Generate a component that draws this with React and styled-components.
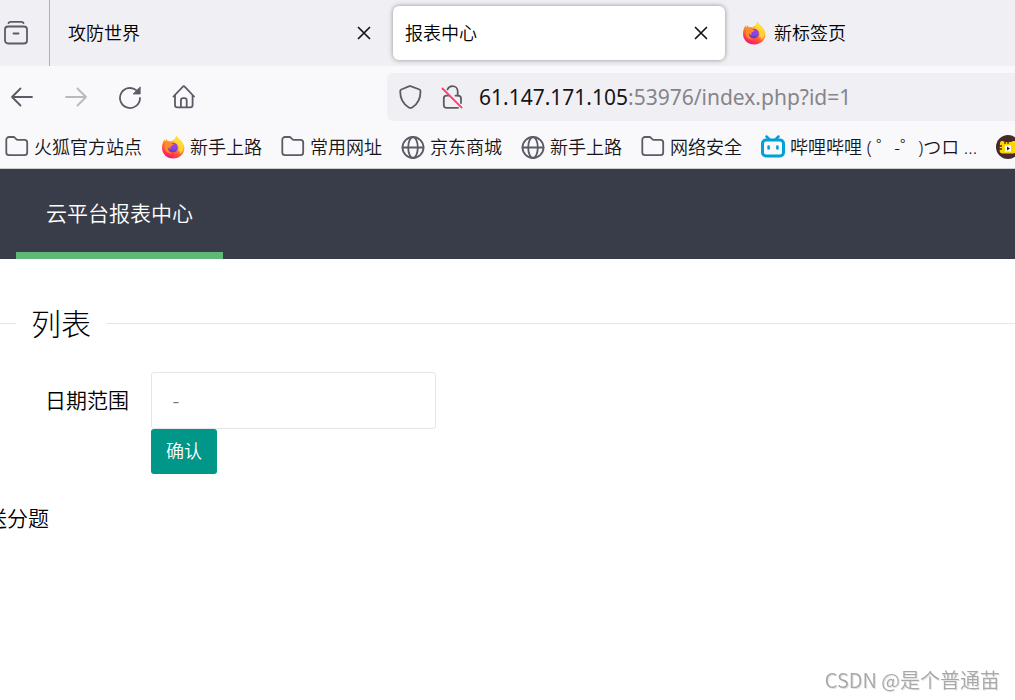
import React from 'react';
import styled, { createGlobalStyle, css } from 'styled-components';

const GlobalStyle = createGlobalStyle`
  * {
    box-sizing: border-box;
  }
  body {
    margin: 0;
    background: #fff;
    color: #000;
    font-family: "Noto Sans", "Noto Sans CJK SC", sans-serif;
    font-weight: 350;
    overflow-x: hidden;
  }
  button, input {
    font-family: inherit;
    font-weight: inherit;
  }
`;

const Browser = styled.div`
  min-height: 100vh;
  overflow: hidden;
`;

const TabStrip = styled.div`
  display: flex;
  align-items: center;
  height: 66px;
  background: #f0eff4;
`;

const IconButton = styled.button`
  display: flex;
  align-items: center;
  justify-content: center;
  flex: none;
  width: ${props => props.$width || 44}px;
  height: 48px;
  padding: 0;
  border: 0;
  background: none;
  color: #5b5b66;
  opacity: ${props => (props.disabled ? 0.4 : 1)};
`;

const RecentArea = styled.div`
  display: flex;
  align-items: center;
  flex: none;
  width: 50px;
  height: 66px;
  border-right: 1px solid #b0afb5;
`;

const Tabs = styled.div`
  display: flex;
  gap: 5px;
  padding-left: 6px;
`;

const Tab = styled.div`
  display: flex;
  align-items: center;
  flex: none;
  gap: 8px;
  width: 332px;
  height: 54px;
  padding: 0 12px;
  border-radius: 6px;
  ${props => props.$active && css`
    background: #fff;
    box-shadow: 0 0 5px rgba(0, 0, 0, 0.4);
  `}
`;

const TabTitle = styled.span`
  flex: 1;
  font-size: 18px;
  line-height: 24px;
`;

const CloseButton = styled(IconButton)`
  height: 24px;
  color: #15141a;
`;

const Toolbar = styled.div`
  display: flex;
  align-items: center;
  gap: 10px;
  height: 60px;
  padding-top: 1px;
  background: #f9f9fb;
`;

const UrlBar = styled.div`
  display: flex;
  align-items: center;
  flex: 1;
  height: 48px;
  margin-left: 171px;
  padding-left: 11px;
  border-radius: 6px 0 0 6px;
  background: #f0f0f4;
  color: #5b5b66;
`;

const UrlIcons = styled.div`
  display: flex;
  gap: 18px;
  margin-right: 15px;
`;

const Url = styled.div`
  font-size: 21px;
  line-height: 28px;
  font-weight: 400;
  color: #85858b;
`;

const Host = styled.span`
  color: #15141a;
`;

const Bookmarks = styled.nav`
  display: flex;
  align-items: center;
  gap: 19px;
  height: 43px;
  padding-left: 5px;
  border-bottom: 1px solid #ccc;
  background: #f9f9fb;
`;

const Bookmark = styled.a`
  display: flex;
  align-items: center;
  flex: none;
  gap: 5px;
  color: #15141a;
  font-size: 18px;
  line-height: 24px;
  text-decoration: none;
  white-space: pre;
  svg {
    color: #5b5b66;
  }
`;

const Nav = styled.nav`
  display: flex;
  height: 90px;
  padding-left: 16px;
  background: #393d49;
`;

const NavLink = styled.a`
  height: 90px;
  padding: 0 30px;
  border-bottom: 7px solid #5fb878;
  color: #fff;
  font-size: 21px;
  line-height: 88px;
  text-decoration: none;
`;

const Section = styled.fieldset`
  margin: 42px 0 26px;
  padding: 0;
  border: 0;
  border-top: 1px solid #e6e6e6;
`;

const SectionTitle = styled.legend`
  margin-left: 16px;
  padding: 0 15px;
  font-size: 30px;
  line-height: 45px;
  font-weight: 300;
`;

const Form = styled.form`
  display: flex;
`;

const Label = styled.label`
  width: 151px;
  padding-right: 22px;
  font-size: 21px;
  line-height: 56px;
  text-align: right;
`;

const Field = styled.div`
  display: flex;
  flex-direction: column;
  align-items: flex-start;
`;

const DateInput = styled.input`
  width: 285px;
  height: 57px;
  padding: 0 15px;
  border: 1px solid #e6e6e6;
  border-radius: 3px;
  background: #fff;
  font-size: 21px;
  &::placeholder {
    color: #757575;
  }
`;

const Submit = styled.button`
  height: 45px;
  padding: 0 15px 3px;
  border: 0;
  border-radius: 3px;
  background: #009688;
  color: #fff;
  font-size: 18px;
`;

const Note = styled.p`
  margin: 28px 0 0 -14px;
  font-size: 21px;
  line-height: 32px;
`;

const Watermark = styled.div`
  position: fixed;
  right: 15px;
  bottom: 5px;
  color: #a8a8a8;
  font-family: "Noto Sans CJK SC", sans-serif;
  font-size: 20px;
  line-height: 30px;
  text-shadow: 1px 1px 0 #e4e4e4;
`;

const Icon = ({ size = 24, children }) => (
  <svg width={size} height={size} viewBox="0 0 24 24" fill="none" stroke="currentColor"
    strokeWidth="1.8" strokeLinecap="round" strokeLinejoin="round" aria-hidden="true">
    {children}
  </svg>
);

const FolderIcon = () => (
  <Icon>
    <path d="M4 2H8.3C9 2 9.6 2.3 10 2.8L11.3 4.2C11.7 4.7 12.2 4.9 12.8 4.9H19.5C21 4.9 22.2 6 22.2 7.500V17.500C22.2 19 21 20.200 19.5 20.200H4C2.500 20.200 1.300 19 1.300 17.500V4.700C1.300 3.200 2.500 2 4 2Z" />
  </Icon>
);

const GlobeIcon = () => (
  <Icon>
    <circle cx="12" cy="12.500" r="10.500" />
    <ellipse cx="12" cy="12.500" rx="4.800" ry="10.500" />
    <path d="M1.500 12.500H22.500" />
  </Icon>
);

const CloseIcon = () => (
  <Icon><path d="M6.500 6.500L17.500 17.500M17.500 6.500L6.500 17.500" strokeWidth="1.7" /></Icon>
);

const FirefoxIcon = () => {
  const id = React.useId();
  return (
    <svg width="24" height="24" viewBox="0 0 24 24" aria-hidden="true">
      <defs>
        <linearGradient id={`${id}a`} x1="0.800" y1="0.050" x2="0.300" y2="1">
          <stop offset="0.050" stopColor="#fff44f" />
          <stop offset="0.350" stopColor="#ffb02a" />
          <stop offset="0.600" stopColor="#ff6a2e" />
          <stop offset="0.850" stopColor="#ff2f56" />
          <stop offset="1" stopColor="#e31587" />
        </linearGradient>
        <radialGradient id={`${id}b`} cx="0.600" cy="0.200" r="0.900">
          <stop offset="0" stopColor="#b833e1" />
          <stop offset="0.500" stopColor="#7a4be8" />
          <stop offset="1" stopColor="#5b32b5" />
        </radialGradient>
      </defs>
      <path fill={`url(#${id}a)`} d="M15.500 0.500C16.200 2.800 18.400 3.900 20.200 6C22 8 23.400 10.200 23.400 13C23.400 19 18.600 23.500 12.200 23.500C5.800 23.500 1 19 1 12.800C1 9 2.200 6.200 3.600 4.200L4.200 6.200L5.800 4L6.800 6.200C8 6 9 6 10.200 6.300C11.800 5.600 14.800 4 15.500 0.500Z" />
      <circle cx="12" cy="12.500" r="4.800" fill={`url(#${id}b)`} />
      <path fill="#ff8b2b" d="M4 8C6 6.500 8.300 6.400 10.400 7C9.800 8.200 10.600 9 12.600 9.200C12.400 10.400 11 10.600 9.800 11.200C9 12 9.300 13 10 13.700C8.600 13.900 7.600 13.400 7 12.300C6.200 15 8.200 18 11.500 18.500C7 19 3.500 16 3.400 12Z" />
      <path fill="#ffdc3e" d="M15.500 0.500C16.200 2.800 18.400 3.900 20.200 6C21.900 7.900 22.800 10.400 22.500 13.300C22.200 16 20.500 18 18.500 19C19.500 16 19 15.500 17 16.600C18.500 12.500 17.500 9 13.800 7.300C13.500 4.800 14.400 2.500 15.500 0.500Z" opacity="0.800" />
    </svg>
  );
};

const BilibiliIcon = () => (
  <svg width="24" height="24" viewBox="0 0 24 24" fill="none" stroke="#00a1d6" strokeWidth="3"
    strokeLinecap="round" strokeLinejoin="round" aria-hidden="true">
    <path d="M5.500 1.500L8.500 4.500M17.500 1.500L14.500 4.500" strokeWidth="2.500" />
    <rect x="1.500" y="5" width="21" height="16" rx="3.500" />
    <path d="M7.600 11.500V13.500M16.400 11.500V13.500" strokeWidth="2.600" />
  </svg>
);

const TigerIcon = () => (
  <svg width="24" height="24" viewBox="0 0 24 24" aria-hidden="true">
    <circle cx="12" cy="12" r="12" fill="#46292b" />
    <path d="M4 8Q4 5.500 7 6L9 7H15L17 6Q20 5.500 20 8V16Q20 18.500 17 18.500H7Q3.500 18.500 3.500 15Z" fill="#ffd500" />
    <path d="M9 5V9M12 5V9M3 11H6M3 14H6" stroke="#46292b" strokeWidth="1.300" />
    <path d="M9 10.500H15V16.500H9Z" fill="#fff" />
    <path d="M11 11.500L14 13.500L11 15.500Z" fill="#222" />
  </svg>
);

const bookmarks = [
  { title: '火狐官方站点', icon: FolderIcon },
  { title: '新手上路', icon: FirefoxIcon },
  { title: '常用网址', icon: FolderIcon },
  { title: '京东商城', icon: GlobeIcon },
  { title: '新手上路', icon: GlobeIcon },
  { title: '网络安全', icon: FolderIcon },
  { title: '哔哩哔哩 ( ゜-゜)つロ ...', icon: BilibiliIcon },
  { title: '', icon: TigerIcon }
];

function App() {
  const handleSubmit = event => {
    event.preventDefault();
  };

  return (
    <Browser lang="zh-CN">
      <GlobalStyle />
      <TabStrip>
        <RecentArea>
          <IconButton $width={32} aria-label="最近浏览">
            <Icon>
              <path d="M4.500 2.200C4.800 1.200 5.500 0.900 6.500 0.900H17.500C18.500 0.900 19.200 1.200 19.500 2.200" />
              <rect x="1" y="5.500" width="22" height="17" rx="3" />
              <path d="M9.500 12.500H14.500" />
            </Icon>
          </IconButton>
        </RecentArea>
        <Tabs>
          <Tab>
            <TabTitle>攻防世界</TabTitle>
            <CloseButton $width={24} aria-label="关闭"><CloseIcon /></CloseButton>
          </Tab>
          <Tab $active>
            <TabTitle>报表中心</TabTitle>
            <CloseButton $width={24} aria-label="关闭"><CloseIcon /></CloseButton>
          </Tab>
          <Tab>
            <FirefoxIcon />
            <TabTitle>新标签页</TabTitle>
          </Tab>
        </Tabs>
      </TabStrip>

      <Toolbar>
        <IconButton aria-label="后退">
          <Icon><path d="M22 12H2M10.500 3.500L2 12L10.500 20.500" /></Icon>
        </IconButton>
        <IconButton aria-label="前进" disabled>
          <Icon><path d="M2 12H22M13.500 3.500L22 12L13.500 20.500" /></Icon>
        </IconButton>
        <IconButton aria-label="刷新">
          <Icon>
            <path d="M22 13A10 10 0 1 1 18.500 5.400" />
            <path d="M22.200 2.200V9H15.400Z" fill="currentColor" strokeWidth="0.800" />
          </Icon>
        </IconButton>
        <IconButton aria-label="主页">
          <Icon>
            <path d="M1.500 11.500L10.700 1.800C11.400 1 12.200 1 12.900 1.800L22 11.500" />
            <path d="M3 10.500V20C3 21.500 3.900 22.400 5.400 22.400H18.200C19.700 22.400 20.600 21.500 20.600 20V10.500" />
            <path d="M8.900 22V15.500C8.900 14 9.800 13.200 11.200 13.200H12.400C13.800 13.200 14.700 14 14.700 15.500V22" />
          </Icon>
        </IconButton>
        <UrlBar>
          <UrlIcons>
            <Icon>
              <path d="M12.500 1.200L21.500 4.500C22.300 4.900 22.500 5.500 22.500 6.300C22.500 14 19 19.500 14.500 22.200C13 23.200 12 23.200 10.500 22.200C6 19.500 2.200 14 2.200 6.300C2.200 5.500 2.500 4.900 3.300 4.500L11.500 1.200Z" />
            </Icon>
            <Icon>
              <path d="M7.500 4.500C8.300 2.500 10 1.200 12.500 1.200C15.500 1.200 17.700 3.500 17.700 6.500V10.500" />
              <path d="M15.500 10.700H18C19.800 10.700 21 12 21 13.500V18M18 22.800H6.500C4.800 22.800 3.800 21.700 3.800 20.200V13.500C3.800 11.900 4.900 10.700 6.500 10.700H9" />
              <path d="M2.500 3.500L21.500 22.500" stroke="#ff3f6c" />
            </Icon>
          </UrlIcons>
          <Url><Host>61.147.171.105</Host>:53976/index.php?id=1</Url>
        </UrlBar>
      </Toolbar>

      <Bookmarks>
        {bookmarks.map(({ title, icon: BookmarkIcon }, index) => (
          <Bookmark href="#" key={index} aria-label={title || '书签'}>
            <BookmarkIcon />
            {title}
          </Bookmark>
        ))}
      </Bookmarks>

      <Nav>
        <NavLink href="#">云平台报表中心</NavLink>
      </Nav>

      <main>
        <Section>
          <SectionTitle>列表</SectionTitle>
        </Section>
        <Form onSubmit={handleSubmit}>
          <Label htmlFor="range">日期范围</Label>
          <Field>
            <DateInput id="range" type="text" placeholder=" - " />
            <Submit type="submit">确认</Submit>
          </Field>
        </Form>
        <Note>送分题</Note>
      </main>

      <Watermark>CSDN @是个普通苗</Watermark>
    </Browser>
  );
}

export default App;
